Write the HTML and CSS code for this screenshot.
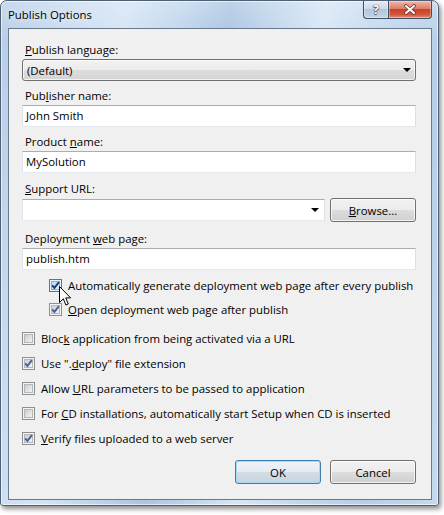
FILE: index.html
```html
<!DOCTYPE html>
<html lang="en">
<head>
<meta charset="utf-8">
<title>Publish Options</title>
<link rel="stylesheet" href="styles.css">
</head>
<body>
<svg class="defs" aria-hidden="true">
  <defs>
    <linearGradient id="cb-fill" x1="0" y1="0" x2="1" y2="1">
      <stop offset="0" stop-color="#c5cad1"/>
      <stop offset="1" stop-color="#f6f6f6"/>
    </linearGradient>
    <linearGradient id="cb-fill-hot" x1="0" y1="0" x2="1" y2="1">
      <stop offset="0" stop-color="#a9d9fb"/>
      <stop offset="1" stop-color="#eaf6fe"/>
    </linearGradient>
    <symbol id="cb-off" viewBox="0 0 13 13">
      <rect x="0.5" y="0.5" width="12" height="12" fill="#f4f4f4" stroke="#8e8f8f"/>
      <rect x="2.5" y="2.5" width="8" height="8" fill="url(#cb-fill)" stroke="#b4b8bd"/>
    </symbol>
    <symbol id="cb-on" viewBox="0 0 13 13">
      <rect x="0.5" y="0.5" width="12" height="12" fill="#f4f4f4" stroke="#8e8f8f"/>
      <rect x="2.5" y="2.5" width="8" height="8" fill="url(#cb-fill)" stroke="#b4b8bd"/>
      <path d="M3.2 6.4 L5.4 8.9 L9.9 3.2" fill="none" stroke="#4a6197" stroke-width="1.9"/>
    </symbol>
    <symbol id="cb-on-hot" viewBox="0 0 13 13">
      <rect x="0.5" y="0.5" width="12" height="12" fill="#e8f4fd" stroke="#3c7fb1"/>
      <rect x="2.5" y="2.5" width="8" height="8" fill="url(#cb-fill-hot)" stroke="#79b8e6"/>
      <path d="M3.2 6.4 L5.4 8.9 L9.9 3.2" fill="none" stroke="#22396f" stroke-width="1.9"/>
    </symbol>
  </defs>
</svg>

<div class="window">
  <div class="titlebar">
    <span class="title">Publish Options</span>
    <div class="caps">
      <span class="cap help">?</span>
      <span class="cap close">
        <svg width="14" height="11" viewBox="0 0 14 11">
          <path d="M3 2 L11 9 M11 2 L3 9" stroke="#6b3a30" stroke-width="3.6" stroke-linecap="round"/>
          <path d="M3 2 L11 9 M11 2 L3 9" stroke="#ffffff" stroke-width="2" stroke-linecap="round"/>
        </svg>
      </span>
    </div>
  </div>

  <div class="client">
    <div class="group">
      <div class="label"><u>P</u>ublish language:</div>
      <div class="droplist"><span>(Default)</span><i class="arrow"></i></div>
    </div>

    <div class="group">
      <div class="label">Pub<u>l</u>isher name:</div>
      <div class="textbox">John Smith</div>
    </div>

    <div class="group">
      <div class="label">Product <u>n</u>ame:</div>
      <div class="textbox">MySolution</div>
    </div>

    <div class="group group-url">
      <div class="label"><u>S</u>upport URL:</div>
      <div class="url-row">
        <div class="textbox combo"><span></span><i class="arrow"></i></div>
        <button class="btn browse"><u>B</u>rowse...</button>
      </div>
    </div>

    <div class="group group-web">
      <div class="label">Deployment <u>w</u>eb page:</div>
      <div class="textbox">publish.htm</div>
    </div>

    <div class="checks sub">
      <div class="check"><svg class="cb"><use href="#cb-on-hot"/></svg><span>Automatically <u>g</u>enerate deployment web page after every publish</span></div>
      <div class="check"><svg class="cb"><use href="#cb-on"/></svg><span><u>O</u>pen deployment web page after publish</span></div>
    </div>

    <div class="checks main">
      <div class="check"><svg class="cb"><use href="#cb-off"/></svg><span>Bloc<u>k</u> application from being activated via a URL</span></div>
      <div class="check"><svg class="cb"><use href="#cb-on"/></svg><span>Use ".<u>d</u>eploy" file extension</span></div>
      <div class="check"><svg class="cb"><use href="#cb-off"/></svg><span>Allow <u>U</u>RL parameters to be passed to application</span></div>
      <div class="check"><svg class="cb"><use href="#cb-off"/></svg><span>For <u>C</u>D installations, automatically start Setup when CD is inserted</span></div>
      <div class="check"><svg class="cb"><use href="#cb-on"/></svg><span><u>V</u>erify files uploaded to a web server</span></div>
    </div>

    <div class="footer">
      <button class="btn default">OK</button>
      <button class="btn">Cancel</button>
    </div>
  </div>
</div>

<svg class="pointer" width="13" height="21" viewBox="0 0 13 21">
  <path d="M0.5 0.5 L0.5 16.5 L4.3 12.8 L6.9 19 L9.3 18 L6.7 11.9 L11.6 11.9 Z" fill="#ffffff" stroke="#000000" stroke-width="1" stroke-linejoin="miter"/>
</svg>
</body>
</html>
```

FILE: styles.css
```css
* {
  box-sizing: border-box;
}

html,
body {
  margin: 0;
}

body {
  width: 444px;
  height: 515px;
  overflow: hidden;
  background: #ffffff;
  font-family: "Open Sans", "Noto Sans", sans-serif;
  font-size: 11.4px;
  color: #000000;
}

.defs {
  position: absolute;
  width: 0;
  height: 0;
}

/* Aero glass frame */
.window {
  width: 439px;
  height: 506px;
  border: 1px solid #4f6073;
  border-radius: 7px 7px 3px 3px;
  background:
    linear-gradient(180deg, rgba(255, 255, 255, 0.25), rgba(255, 255, 255, 0) 40px),
    linear-gradient(100deg,
      #b5cde7 0%, #c7daef 12%, #d4e4f4 24%, #c0d6ed 34%,
      #a9c4e1 44%, #bdd3eb 52%, #d7e6f5 62%, #c2d7ed 74%,
      #b6cee8 86%, #c6daef 100%);
  box-shadow:
    2px 3px 5px rgba(0, 0, 0, 0.45),
    inset 0 0 0 1px rgba(255, 255, 255, 0.6);
  display: flex;
  flex-direction: column;
}

.titlebar {
  flex: none;
  height: 27px;
  padding: 0 6px 0 7px;
  display: flex;
  justify-content: space-between;
  align-items: flex-start;
}

.title {
  line-height: 27px;
  font-size: 11.4px;
  text-shadow: 0 0 6px rgba(255, 255, 255, 0.9);
}

.caps {
  display: flex;
}

.cap {
  height: 18px;
  border: 1px solid #3e4f64;
  border-top: none;
  display: flex;
  align-items: center;
  justify-content: center;
  box-shadow: inset 0 0 0 1px rgba(255, 255, 255, 0.35);
}

.help {
  width: 25px;
  border-right: none;
  border-radius: 0 0 0 4px;
  background: linear-gradient(180deg, #e4ecf5 0%, #cbd9e8 45%, #b2c5da 50%, #c4d5e7 100%);
  color: #ffffff;
  font-weight: bold;
  font-size: 12px;
  line-height: 1;
  text-shadow: 0 0 1px #3a4b60, 0 0 1px #3a4b60, 0 1px 1px #3a4b60;
}

.close {
  width: 44px;
  border-radius: 0 0 4px 0;
  background: linear-gradient(180deg, #efb8ab 0%, #de7d68 45%, #c8432a 50%, #d2563c 80%, #e8917b 100%);
}

.client {
  flex: 1;
  margin: 0 6px 5px 7px;
  border: 1px solid #6a7a8d;
  background: #f0f0f0;
  padding: 12px 15px 15px 13px;
  display: flex;
  flex-direction: column;
}

.group + .group {
  margin-top: 6px;
}

.group.group-url {
  margin-top: 7px;
}

.group.group-web {
  margin-top: 8px;
}

.label {
  height: 18px;
  line-height: 18px;
  padding-left: 3px;
}

/* Vista text field: darker top edge, light sides */
.textbox {
  height: 22px;
  line-height: 20px;
  padding: 0 3px;
  background: #ffffff;
  border: 1px solid #e3e9ef;
  border-top-color: #abadb3;
  border-left-color: #e2e3ea;
  border-right-color: #dbdfe6;
}

.combo {
  flex: 1;
  display: flex;
  align-items: center;
  justify-content: space-between;
  padding-right: 5px;
}

.droplist {
  height: 22px;
  padding: 0 4px 0 4px;
  border: 1px solid #707070;
  border-radius: 3px;
  background: linear-gradient(180deg, #f2f2f2 0%, #ebebeb 50%, #dddddd 50%, #d4d4d4 100%);
  box-shadow: inset 0 0 0 1px rgba(255, 255, 255, 0.7);
  display: flex;
  align-items: center;
  justify-content: space-between;
}

.arrow {
  width: 0;
  height: 0;
  border-left: 4px solid transparent;
  border-right: 4px solid transparent;
  border-top: 4px solid #000000;
}

.url-row {
  display: flex;
  align-items: center;
  gap: 5px;
}

.btn {
  width: 86px;
  height: 24px;
  padding: 0;
  font: inherit;
  color: #000000;
  border: 1px solid #707070;
  border-radius: 3px;
  background: linear-gradient(180deg, #f2f2f2 0%, #ebebeb 50%, #dddddd 50%, #cfcfcf 100%);
  box-shadow: inset 0 0 0 1px rgba(255, 255, 255, 0.75);
}

.btn.browse {
  flex: none;
}

.btn.default {
  border-color: #3c7fb1;
  background: linear-gradient(180deg, #eef3f7 0%, #e4ebf1 50%, #d3dde6 50%, #c7d3de 100%);
  box-shadow: inset 0 0 0 1px #a8d8f3;
}

.checks.sub {
  margin-top: 3px;
}

.checks.main {
  margin-top: 5px;
}

.check {
  height: 24px;
  display: flex;
  align-items: center;
  gap: 6px;
}

.sub .check {
  padding-left: 27px;
}

.main .check {
  height: 25px;
}

.cb {
  flex: none;
  width: 13px;
  height: 13px;
}

.footer {
  margin-top: auto;
  display: flex;
  justify-content: flex-end;
  gap: 9px;
}

/* mouse pointer resting on the first option */
.pointer {
  position: absolute;
  left: 59px;
  top: 286px;
}
```
